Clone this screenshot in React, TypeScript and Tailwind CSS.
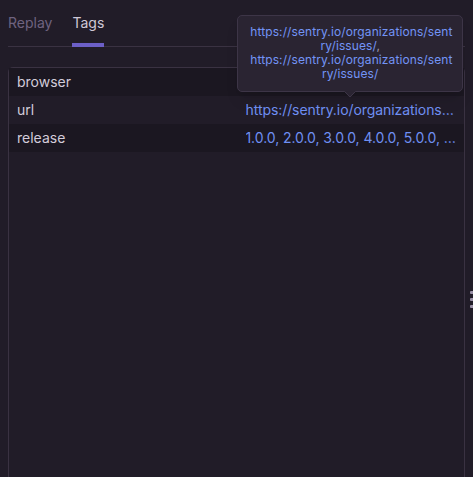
const rows = [
  { key: "browser", value: "" },
  { key: "url", value: "https://sentry.io/organizations/sentry/issues/, https://sentry.io/organizations/sentry/issues/", tip: true },
  { key: "release", value: "1.0.0, 2.0.0, 3.0.0, 4.0.0, 5.0.0, 6.0.0, 7.0.0" },
];

function Tooltip() {
  return (
    <div className="absolute bottom-[calc(100%+4px)] left-1/2 -translate-x-1/2 z-10 w-[226px]">
      <div className="rounded-[5px] border border-[#3d3547] bg-[#2a2432] px-3 pt-[9px] pb-[10px] text-center text-[12px] leading-[14px] tracking-[0.1px] text-[#7394f6] shadow-lg">
        <div>https://sentry.io/organizations/sent</div>
        <div>
          ry/issues/<span className="text-[#a59cb0]">,</span>
        </div>
        <div>https://sentry.io/organizations/sent</div>
        <div>ry/issues/</div>
      </div>
      <svg className="absolute left-1/2 -translate-x-1/2 -bottom-[5px]" width="12" height="6" viewBox="0 0 12 6">
        <path d="M0 0 L6 6 L12 0" fill="#2a2432" stroke="#3d3547" strokeWidth="1" />
        <rect x="0" y="-1" width="12" height="1.2" fill="#2a2432" />
      </svg>
    </div>
  );
}

export default function App() {
  return (
    <div
      className="relative flex h-[477px] w-[473px] flex-col overflow-hidden bg-[#211c28] px-2 text-[14px]"
      style={{ fontFamily: "Inter, 'Noto Sans', sans-serif" }}
    >
      <div className="flex h-[47px] items-start gap-5 border-b border-[#3a3242] pt-[13px]">
        <span className="leading-5 text-[#6f6380]">Replay</span>
        <span className="relative h-[33px] leading-5 text-[#cfc8d7]">
          Tags
          <span className="absolute bottom-[-1px] left-0 right-0 h-1 bg-[#6c5fc7]" />
        </span>
      </div>

      <div className="mt-5 flex-1 rounded-t-[5px] border border-b-0 border-[#3a3242]">
        <div className="grid grid-cols-2">
          {rows.map((r, i) => (
            <div key={r.key} className="contents">
              <div className={`px-2 py-1 leading-5 text-[#d3ccda] ${i % 2 === 0 ? "bg-[#1b1721]" : ""}`}>
                {r.key}
              </div>
              <div
                className={`relative min-w-0 pl-[9px] pr-[7px] py-1 leading-5 text-[#6f8ff2] ${i % 2 === 0 ? "bg-[#1b1721]" : ""}`}
              >
                <div className="truncate tracking-[-0.07px]">{r.value}</div>
                {r.tip && <Tooltip />}
              </div>
            </div>
          ))}
        </div>
      </div>

      <div className="absolute right-[-2px] top-[291px] flex flex-col gap-[4px]">
        <span className="h-[3px] w-[5px] rounded-[1px] bg-[#9a90a6]" />
        <span className="h-[3px] w-[5px] rounded-[1px] bg-[#9a90a6]" />
        <span className="h-[3px] w-[5px] rounded-[1px] bg-[#9a90a6]" />
      </div>
    </div>
  );
}
